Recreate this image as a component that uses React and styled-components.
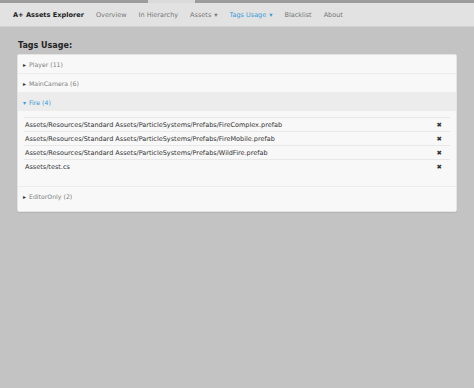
import React, { useState } from "react";
import styled, { createGlobalStyle } from "styled-components";

const GlobalStyle = createGlobalStyle`
  html, body {
    margin: 0;
    padding: 0;
    background: #c3c3c3;
    font-family: "DejaVu Sans", "Liberation Sans", sans-serif;
  }
`;

const tags = [
  { name: "Player", count: 11, files: [] },
  { name: "MainCamera", count: 6, files: [] },
  {
    name: "Fire",
    count: 4,
    files: [
      "Assets/Resources/Standard Assets/ParticleSystems/Prefabs/FireComplex.prefab",
      "Assets/Resources/Standard Assets/ParticleSystems/Prefabs/FireMobile.prefab",
      "Assets/Resources/Standard Assets/ParticleSystems/Prefabs/WildFire.prefab",
      "Assets/test.cs",
    ],
  },
  { name: "EditorOnly", count: 2, files: [] },
];

const navItems = [
  { label: "Overview" },
  { label: "In Hierarchy" },
  { label: "Assets", caret: true },
  { label: "Tags Usage", caret: true, active: true },
  { label: "Blacklist" },
  { label: "About" },
];

const App = () => {
  const [open, setOpen] = useState("Fire");

  return (
    <Page>
      <GlobalStyle />
      <TopStrip>
        <StripGap />
      </TopStrip>
      <NavBar>
        <Brand>A+ Assets Explorer</Brand>
        {navItems.map((item) => (
          <NavItem key={item.label} active={item.active}>
            {item.label}
            {item.caret && <Caret>▾</Caret>}
          </NavItem>
        ))}
      </NavBar>
      <Content>
        <Title>Tags Usage:</Title>
        <Panel>
          {tags.map((tag) => {
            const isOpen = open === tag.name;
            return (
              <Group key={tag.name}>
                <GroupHeader open={isOpen} onClick={() => setOpen(isOpen ? null : tag.name)}>
                  <Arrow open={isOpen}>{isOpen ? "▾" : "▸"}</Arrow>
                  {tag.name} ({tag.count})
                </GroupHeader>
                {isOpen && (
                  <GroupBody>
                    {tag.files.map((f) => (
                      <FileRow key={f}>
                        <span>{f}</span>
                        <Remove>✖</Remove>
                      </FileRow>
                    ))}
                  </GroupBody>
                )}
              </Group>
            );
          })}
        </Panel>
      </Content>
    </Page>
  );
};

const Page = styled.div`
  width: 474px;
  height: 388px;
  background: #c3c3c3;
  overflow: hidden;
`;

const TopStrip = styled.div`
  height: 3px;
  background: #9c9c9c;
  display: flex;
  padding-left: 148px;
`;

const StripGap = styled.div`
  width: 47px;
  background: #dadada;
`;

const NavBar = styled.div`
  height: 23px;
  background: #e2e2e2;
  border-bottom: 1px solid #d2d2d2;
  display: flex;
  align-items: center;
  padding-left: 13px;
  gap: 12px;
  font-size: 6.5px;
`;

const Brand = styled.div`
  font-weight: bold;
  font-size: 6.6px;
  color: #222;
`;

const NavItem = styled.div`
  color: ${({ active }) => (active ? "#3a9bd8" : "#777")};
  display: flex;
  align-items: center;
`;

const Caret = styled.span`
  font-size: 6.5px;
  margin-left: 3px;
`;

const Content = styled.div`
  padding: 10px 18px 0 17px;
`;

const Title = styled.div`
  font-weight: bold;
  font-size: 8px;
  color: #222;
  padding-left: 1px;
  height: 16px;
  display: flex;
  align-items: center;
  margin-bottom: 1px;
`;

const Panel = styled.div`
  background: #f8f8f8;
  border: 1px solid #e4e4e4;
  border-radius: 2px;
  width: 438px;
  padding-bottom: 6px;
  box-shadow: 0 1px 1px rgba(0, 0, 0, 0.08);
`;

const Group = styled.div`
  border-bottom: 1px solid #ececec;
  &:last-child {
    border-bottom: none;
  }
`;

const GroupHeader = styled.div`
  height: 18px;
  display: flex;
  align-items: center;
  padding-left: 5px;
  font-size: 6.2px;
  color: ${({ open }) => (open ? "#3a9bd8" : "#808080")};
  background: ${({ open }) => (open ? "#ececec" : "transparent")};
  cursor: pointer;
`;

const Arrow = styled.span`
  font-size: 6px;
  width: 5px;
  margin-right: 1px;
  color: ${({ open }) => (open ? "#3a9bd8" : "#333")};
`;

const GroupBody = styled.div`
  padding: 6px 6px 13px 6px;
`;

const FileRow = styled.div`
  height: 13px;
  display: flex;
  align-items: center;
  justify-content: space-between;
  padding: 0 8px 0 1px;
  border-top: 1px solid #e8e8e8;
  font-size: 6.5px;
  color: #333;
`;

const Remove = styled.span`
  font-size: 6.5px;
  color: #333;
`;

export default App;
